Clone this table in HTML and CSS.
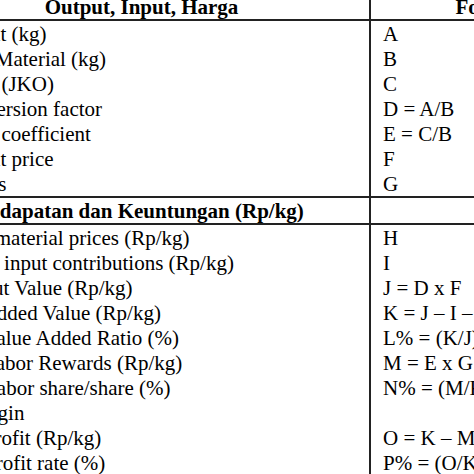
FILE: index.html
```html
<!DOCTYPE html>
<html>
<head>
<meta charset="utf-8">
<link rel="stylesheet" href="styles.css">
</head>
<body>
<div class="frame">
<table class="hayami">
  <thead>
    <tr><th class="c1">Output, Input, Harga</th><th class="c2">Formula</th></tr>
  </thead>
  <tbody>
    <tr><td class="main shift3">Output (kg)</td><td class="f">A</td></tr>
    <tr><td class="main">Raw Material (kg)</td><td class="f">B</td></tr>
    <tr><td class="main shift5">Labor (JKO)</td><td class="f">C</td></tr>
    <tr><td class="main">Conversion factor</td><td class="f">D = A/B</td></tr>
    <tr><td class="main shift5">Labor coefficient</td><td class="f">E = C/B</td></tr>
    <tr><td class="main shift3">Output price</td><td class="f">F</td></tr>
    <tr><td class="main">Wages</td><td class="f">G</td></tr>
    <tr class="section"><td class="sec">Pendapatan dan Keuntungan (Rp/kg)</td><td class="f"></td></tr>
    <tr><td class="main">Raw material prices (Rp/kg)</td><td class="f">H</td></tr>
    <tr><td class="main">Other input contributions (Rp/kg)</td><td class="f">I</td></tr>
    <tr><td class="main">Output Value (Rp/kg)</td><td class="f">J = D x F</td></tr>
    <tr><td class="sub">a. Added Value (Rp/kg)</td><td class="f">K = J – I – H</td></tr>
    <tr><td class="sub">b. Value Added Ratio (%)</td><td class="f">L% = (K/J) x 100%</td></tr>
    <tr><td class="sub">a. Labor Rewards (Rp/kg)</td><td class="f">M = E x G</td></tr>
    <tr><td class="sub">b. Labor share/share (%)</td><td class="f">N% = (M/K) x 100%</td></tr>
    <tr><td class="sub">Margin</td><td class="f"></td></tr>
    <tr><td class="sub">a. Profit (Rp/kg)</td><td class="f">O = K – M</td></tr>
    <tr><td class="sub">b. Profit rate (%)</td><td class="f">P% = (O/K) x 100%</td></tr>
  </tbody>
</table>
</div>
</body>
</html>
```
FILE: styles.css
```css
html, body {
  margin: 0;
  padding: 0;
  background: #fff;
}
body {
  width: 474px;
  height: 474px;
  overflow: hidden;
}
.frame {
  width: 474px;
  height: 474px;
  overflow: hidden;
}
.hayami {
  border-collapse: collapse;
  margin-left: -86px;
  margin-top: -6px;
  width: 702px;
  table-layout: fixed;
  font-family: "Liberation Serif", "Times New Roman", serif;
  font-size: 21px;
  color: #000;
}
.hayami th,
.hayami td {
  height: 23px;
  padding: 2px 0 0 0;
  line-height: 23px;
  white-space: nowrap;
  overflow: visible;
  vertical-align: top;
}
.hayami th {
  font-weight: bold;
  text-align: center;
  border-bottom: 2px solid #222;
}
.c1 { width: 455px; }
.c2 { width: 247px; }
.hayami th.c1,
.hayami td.main,
.hayami td.sub,
.hayami td.sec {
  border-right: 2px solid #222;
}
.main { padding-left: 37px !important; }
.main.shift3 { padding-left: 34px !important; }
.main.shift5 { padding-left: 32px !important; }
.sub { padding-left: 49px !important; }
.sec {
  padding-left: 52px !important;
  font-weight: bold;
}
.f { padding-left: 12px !important; }
.section td {
  border-top: 2px solid #222;
  border-bottom: 2px solid #222;
}
```
